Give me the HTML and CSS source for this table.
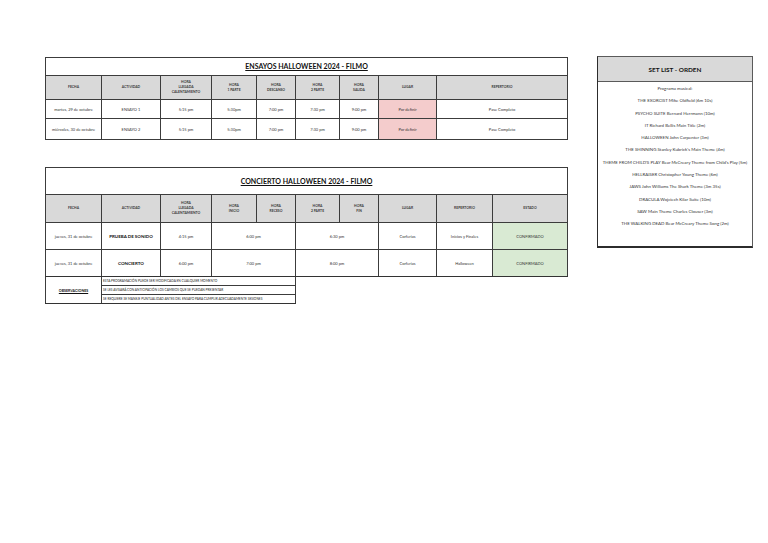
FILE: index.html
```html
<!DOCTYPE html>
<html lang="es">
<head>
<meta charset="utf-8">
<title>Halloween 2024 - Filmo</title>
<link rel="stylesheet" href="styles.css">
</head>
<body>
<div class="page">
  <div class="left">
    <table class="sheet sheet-ensayos">
      <colgroup>
        <col class="c56"><col class="c59"><col class="c51"><col class="c45"><col class="c39"><col class="c44"><col class="c39"><col class="c58"><col class="c131">
      </colgroup>
      <tr class="r-title1"><td colspan="9" class="title">ENSAYOS HALLOWEEN 2024 - FILMO</td></tr>
      <tr class="r-head1 head">
        <td>FECHA</td><td>ACTIVIDAD</td><td>HORA<br>LLEGADA<br>CALENTAMIENTO</td><td>HORA<br>1 PARTE</td><td>HORA<br>DESCANSO</td><td>HORA<br>2 PARTE</td><td>HORA<br>SALIDA</td><td>LUGAR</td><td>REPERTORIO</td>
      </tr>
      <tr class="r-data1a">
        <td>martes, 29 de octubre</td><td>ENSAYO 1</td><td>5:15 pm</td><td>5:30pm</td><td>7:00 pm</td><td>7:30 pm</td><td>9:00 pm</td><td class="pink">Por definir</td><td>Pase Completo</td>
      </tr>
      <tr class="r-data1b">
        <td>miércoles, 30 de octubre</td><td>ENSAYO 2</td><td>5:15 pm</td><td>5:30pm</td><td>7:00 pm</td><td>7:30 pm</td><td>9:00 pm</td><td class="pink">Por definir</td><td>Pase Completo</td>
      </tr>
    </table>

    <table class="sheet sheet-concierto">
      <colgroup>
        <col class="c56"><col class="c59"><col class="c51"><col class="c45"><col class="c39"><col class="c44"><col class="c39"><col class="c58"><col class="c56b"><col class="c75">
      </colgroup>
      <tr class="r-title2"><td colspan="10" class="title">CONCIERTO HALLOWEEN 2024 - FILMO</td></tr>
      <tr class="r-head2 head">
        <td>FECHA</td><td>ACTIVIDAD</td><td>HORA<br>LLEGADA<br>CALENTAMIENTO</td><td>HORA<br>INICIO</td><td>HORA<br>RECESO</td><td>HORA<br>2 PARTE</td><td>HORA<br>FIN</td><td>LUGAR</td><td>REPERTORIO</td><td>ESTADO</td>
      </tr>
      <tr class="r-data2">
        <td>jueves, 31 de octubre</td><td class="strong">PRUEBA DE SONIDO</td><td>4:15 pm</td><td colspan="2">6:00 pm</td><td colspan="2">6:30 pm</td><td>Corferias</td><td>Inicios y Finales</td><td class="green">CONFIRMADO</td>
      </tr>
      <tr class="r-data2">
        <td>jueves, 31 de octubre</td><td class="strong">CONCIERTO</td><td>6:00 pm</td><td colspan="2">7:00 pm</td><td colspan="2">8:00 pm</td><td>Corferias</td><td>Halloween</td><td class="green">CONFIRMADO</td>
      </tr>
      <tr class="r-obs">
        <td rowspan="3" class="obs-label">OBSERVACIONES</td>
        <td colspan="4" class="obs-text">ESTA PROGRAMACIÓN PUEDE SER MODIFICADA EN CUALQUIER MOMENTO</td>
        <td colspan="5" class="blank"></td>
      </tr>
      <tr class="r-obs">
        <td colspan="4" class="obs-text">SE LES AVISARÁ CON ANTICIPACIÓN LOS CAMBIOS QUE SE PUEDAN PRESENTAR</td>
        <td colspan="5" class="blank"></td>
      </tr>
      <tr class="r-obs">
        <td colspan="4" class="obs-text">SE REQUIERE SE MANEJE PUNTUALIDAD ANTES DEL ENSAYO PARA CUMPLIR ADECUADAMENTE SESIONES</td>
        <td colspan="5" class="blank"></td>
      </tr>
    </table>
  </div>

  <div class="setlist">
    <div class="setlist-head">SET LIST - ORDEN</div>
    <ul class="setlist-items">
      <li>Programa musical:</li>
      <li>THE EXORCIST Mike Oldfield (6m 10s)</li>
      <li>PSYCHO SUITE Bernard Herrmann (10m)</li>
      <li>IT Richard Bellis Main Title (2m)</li>
      <li>HALLOWEEN John Carpenter (3m)</li>
      <li>THE SHINNING Stanley Kubrick's Main Theme (4m)</li>
      <li>THEME FROM CHILD'S PLAY Bear McCreary Theme from Child's Play (5m)</li>
      <li>HELLRAISER Christopher Young Theme (6m)</li>
      <li>JAWS John Williams The Shark Theme (3m 35s)</li>
      <li>DRACULA Wojciech Kilar Suite (10m)</li>
      <li>SAW Main Theme Charles Clouser (3m)</li>
      <li>THE WALKING DEAD Bear McCreary Theme Song (2m)</li>
    </ul>
  </div>
</div>
</body>
</html>
```

FILE: styles.css
```css
html, body {
  margin: 0;
  padding: 0;
  background: #ffffff;
}

body {
  font-family: Lato, "Open Sans", "Liberation Sans", sans-serif;
  color: #222222;
  -webkit-font-smoothing: antialiased;
}

.page {
  display: flex;
  align-items: flex-start;
  gap: 29px;
  padding: 56px 0 0 45px;
}

.left {
  display: flex;
  flex-direction: column;
  gap: 27px;
  margin-top: 1px;
  width: 523px;
}

.sheet {
  border-collapse: collapse;
  table-layout: fixed;
  width: 522px;
}

.sheet td {
  border: 1px solid #3c3c3c;
  padding: 0;
  text-align: center;
  vertical-align: middle;
  font-size: 4px;
  line-height: 5px;
  color: #333333;
}

.sheet-ensayos {
  border: 1.5px solid #333333;
}

.c56 { width: 56px; }
.c59 { width: 59px; }
.c51 { width: 51px; }
.c45 { width: 45px; }
.c39 { width: 39px; }
.c44 { width: 44px; }
.c58 { width: 58px; }
.c131 { width: 131px; }
.c56b { width: 56px; }
.c75 { width: 75px; }

.sheet td.title {
  font-size: 7px;
  font-weight: 700;
  text-decoration: underline;
  color: #111111;
}

.r-title1 td { height: 17px; }
.r-head1 td { height: 23px; }
.r-data1a td { height: 18px; }
.r-data1b td { height: 20px; }

.r-title2 td { height: 26px; }
.r-head2 td { height: 27px; }
.r-data2 td { height: 26px; }
.r-data2:nth-child(4) td { border-bottom: 1.5px solid #333333; }
.r-obs td { height: 8px; }

.head td {
  background: #d9d9d9;
  font-size: 3.4px;
  line-height: 5px;
  font-weight: 700;
  color: #3a3a3a;
}

.pink { background: #f4cccc; }
.green { background: #d9ead3; }

.sheet td.strong {
  font-size: 4.5px;
  font-weight: 700;
  color: #111111;
}

.sheet td.obs-label {
  font-size: 3.6px;
  font-weight: 700;
  text-decoration: underline;
  color: #111111;
  border-bottom: 1.5px solid #333333;
}

.sheet td.obs-text {
  text-align: left;
  padding-left: 1px;
  font-size: 3.2px;
  line-height: 4px;
  white-space: nowrap;
  overflow: hidden;
  color: #222222;
}

.r-obs:last-child td.obs-text {
  border-bottom: 1.5px solid #333333;
}

.sheet td.blank {
  border: none;
}

.setlist {
  width: 156px;
  height: 192px;
  box-sizing: border-box;
  border: 1px solid #5a5a5a;
  border-bottom: 2px solid #2c2c2c;
  border-left: 1px solid #2c2c2c;
}

.setlist-head {
  height: 24px;
  background: #d9d9d9;
  border-bottom: 1px solid #5a5a5a;
  display: flex;
  align-items: center;
  justify-content: center;
  font-size: 6.4px;
  font-weight: 700;
  color: #111111;
}

.setlist-items {
  list-style: none;
  margin: 0;
  padding: 1px 0 0 0;
  display: flex;
  flex-direction: column;
  align-items: center;
  white-space: nowrap;
}

.setlist-items li {
  height: 12.3px;
  line-height: 12.3px;
  font-size: 4.4px;
  color: #333333;
}
```
